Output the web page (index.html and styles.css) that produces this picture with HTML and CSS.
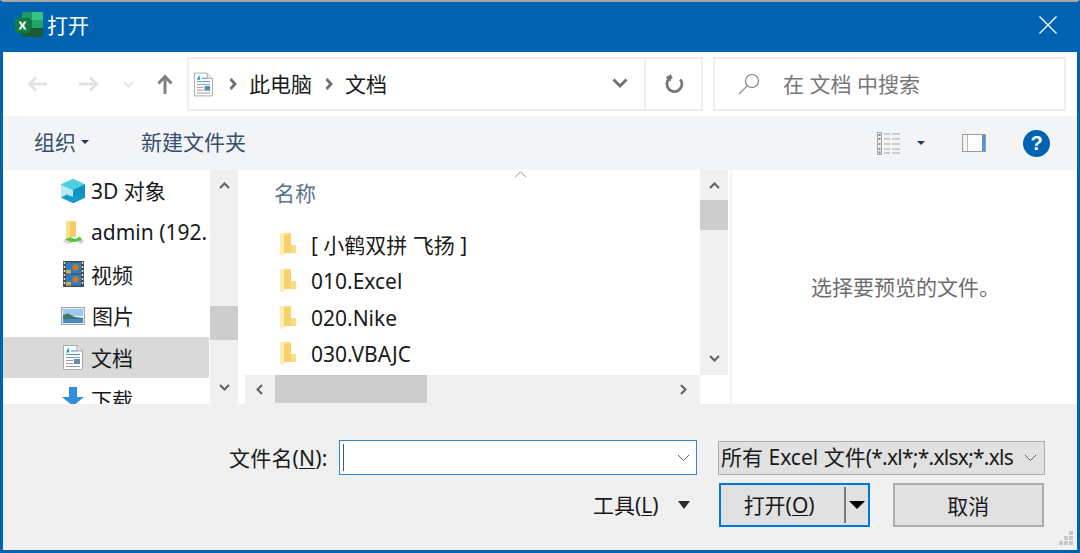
FILE: index.html
```html
<!DOCTYPE html>
<html lang="zh-CN">
<head>
<meta charset="utf-8">
<title>打开</title>
<link rel="stylesheet" href="styles.css">
</head>
<body>
<svg class="defs" width="0" height="0" aria-hidden="true">
  <defs>
    <symbol id="folder" viewBox="0 0 16 24">
      <path d="M0 0H11V12H16V20H5L2 23 0 21Z" fill="#fbdc7e"/>
      <path d="M4 2H11V20H5L4 21Z" fill="#f5d26c"/>
      <path d="M0 0H4V21L2 23 0 21Z" fill="#ffeeb0"/>
    </symbol>
    <symbol id="doc" viewBox="0 0 20 25">
      <path d="M.5.500H14L19.500 6V24.500H.5Z" fill="#fff" stroke="#a9a9a9"/>
      <path d="M14 .5V6H19.500" fill="#e8e8e8" stroke="#a9a9a9"/>
      <path d="M3 7.500 5.500 2.500 6.500 7.500Z" fill="#2f8ad8"/>
      <path d="M8 6h6M3 9.500h14" stroke="#3d93de"/>
      <path d="M3 12.500h14M3 15.500h7M3 18.500h7M3 21.500h14" stroke="#9a9a9a"/>
      <path d="M11 14h6v5h-6Z" fill="#5f8fa8"/>
    </symbol>
  </defs>
</svg>
<div class="window">
  <header class="titlebar">
    <div class="title-left">
      <svg class="app-icon" viewBox="0 0 29 26" width="29" height="26" aria-hidden="true">
        <path d="M7 0H28V8H7Z" fill="#21a366"/>
        <path d="M7 0H17V8H7Z" fill="#1d9a5e"/>
        <path d="M17 0H28V8H17Z" fill="#33c481"/>
        <path d="M7 8H17V16H7Z" fill="#107c41"/>
        <path d="M17 8H28V16H17Z" fill="#21a366"/>
        <path d="M7 16H28V25H7Z" fill="#185c37"/>
        <rect x="0" y="6" width="15" height="15" fill="#107c41"/>
        <path d="M3.500 9.500H6L7.500 12.200 9 9.500H11.500L9 13.500 11.500 17.500H9L7.500 14.800 6 17.500H3.500L6 13.500Z" fill="#fff"/>
      </svg>
      <span class="title-text">打开</span>
    </div>
    <svg class="close-x" viewBox="0 0 18 18" width="18" height="18" aria-hidden="true"><path d="M.5.500 17.500 17.500M17.500.500.5 17.500" stroke="#fff" stroke-width="1.300"/></svg>
  </header>

  <div class="navrow">
    <div class="nav-btns">
      <svg class="nav-arrow" viewBox="0 0 20 16" width="20" height="16" aria-hidden="true"><path d="M20 8H3M9 1.500 2.500 8 9 14.500" fill="none" stroke="#e3e3e3" stroke-width="3"/></svg>
      <svg class="nav-arrow" viewBox="0 0 20 16" width="20" height="16" aria-hidden="true"><path d="M0 8H17M11 1.500 17.500 8 11 14.500" fill="none" stroke="#e3e3e3" stroke-width="3"/></svg>
      <svg class="nav-drop" viewBox="0 0 11 7" width="11" height="7" aria-hidden="true"><path d="M1 1 5.500 5.500 10 1" fill="none" stroke="#e3e3e3" stroke-width="2"/></svg>
      <svg class="nav-up" viewBox="0 0 16 20" width="16" height="20" aria-hidden="true"><path d="M8 20V3M1.500 9.500 8 2.500 14.500 9.500" fill="none" stroke="#808080" stroke-width="3"/></svg>
    </div>
    <div class="address">
      <svg class="addr-doc" width="19" height="25" aria-hidden="true"><use href="#doc"/></svg>
      <svg class="crumb-sep" viewBox="0 0 8 12" width="8" height="12" aria-hidden="true"><path d="M1.500 1 6 6 1.500 11" fill="none" stroke="#6f6f6f" stroke-width="2.800"/></svg>
      <span class="crumb">此电脑</span>
      <svg class="crumb-sep" viewBox="0 0 8 12" width="8" height="12" aria-hidden="true"><path d="M1.500 1 6 6 1.500 11" fill="none" stroke="#6f6f6f" stroke-width="2.800"/></svg>
      <span class="crumb">文档</span>
      <span class="addr-spacer"></span>
      <div class="addr-drop"><svg viewBox="0 0 16 10" width="16" height="10" aria-hidden="true"><path d="M1.500 1.500 8 8 14.500 1.500" fill="none" stroke="#6f6f6f" stroke-width="2.800"/></svg></div>
      <div class="addr-refresh"><svg viewBox="0 0 20 20" width="20" height="20" aria-hidden="true"><path d="M6.500 3.500A7.500 7.500 0 1 0 15 4" fill="none" stroke="#777" stroke-width="2.800" transform="rotate(14 10 10)"/><path d="M8 0V7.500L2.500 3.500Z" fill="#777" transform="translate(-1 0)"/></svg></div>
    </div>
    <div class="search">
      <svg class="search-ico" viewBox="0 0 22 22" width="22" height="22" aria-hidden="true"><circle cx="14" cy="8" r="6.500" fill="none" stroke="#7c7c7c" stroke-width="1.100"/><path d="M9.500 12.500 1 21" stroke="#8c8c8c" stroke-width="1.100"/></svg>
      <span class="search-text">在 文档 中搜索</span>
    </div>
  </div>

  <div class="toolbar">
    <span class="tool org">组织<i class="mini-caret"></i></span>
    <span class="tool newf">新建文件夹</span>
    <span class="toolbar-spacer"></span>
    <svg class="view-ico" viewBox="0 0 24 23" width="24" height="23" aria-hidden="true">
      <rect x=".5" y=".5" width="4" height="22" fill="#eee" stroke="#a8a8a8"/>
      <path d="M1.500 3h2M1.500 7h2" stroke="#5b8fb9" stroke-width="2"/><path d="M1.500 12h2" stroke="#e08a3c" stroke-width="2"/><path d="M1.500 17h2M1.500 20.500h2" stroke="#5b8fb9" stroke-width="2"/>
      <path d="M7 2h6M15 2h8M7 7h6M15 7h8M7 12h6M15 12h8M7 17h6M15 17h8M7 21h6M15 21h8" stroke="#a3a3a3" stroke-width="1.200"/>
    </svg>
    <i class="mini-caret view-caret"></i>
    <svg class="pane-ico" viewBox="0 0 24 18" width="24" height="18" aria-hidden="true">
      <rect x=".5" y=".5" width="23" height="17" fill="#fdfdfd" stroke="#9e9e9e"/>
      <rect x="1" y="1" width="4" height="16" fill="#f4f4f4"/>
      <path d="M5.500 1V17" stroke="#bbb"/>
      <rect x="20" y="1" width="3" height="16" fill="#4a97de"/>
    </svg>
    <span class="help">?</span>
  </div>

  <div class="main">
    <nav class="tree">
      <div class="tree-list">
        <div class="tree-item">
          <svg class="tree-ico" viewBox="0 0 26 26" width="26" height="26" aria-hidden="true">
            <path d="M13 1 25 6.500V19.500L13 25 1 19.500V6.500Z" fill="#18a6d6"/>
            <path d="M13 1 25 6.500 13 12 1 6.500Z" fill="#4ccfe4"/>
            <path d="M1 6.500 13 12V25L1 19.500Z" fill="#b5ecf4"/>
            <path d="M13 12 25 6.500V19.500L13 25Z" fill="#0f93c4"/>
            <path d="M1 19.500 7 16.500 13 19 19 16.500 25 19.500 13 25Z" fill="#129bcc"/>
          </svg><span>3D 对象</span>
        </div>
        <div class="tree-item">
          <svg class="tree-ico" viewBox="0 0 26 26" width="26" height="26" aria-hidden="true">
            <path d="M6 1H16V17H9L6 19Z" fill="#fbe08a"/>
            <path d="M10 2H16V17H10Z" fill="#f3cc63"/>
            <path d="M3 21 6 18.500 11 20 12 23 7 24Z" fill="#d6d6d6"/>
            <path d="M16 21 20 19 24 21 21 24Z" fill="#cfcfcf"/>
            <path d="M5 19.500 10 17 15 19 20 16.500 22 20 15 22 11 22Z" fill="#5fc63a"/>
          </svg><span>admin (192.</span>
        </div>
        <div class="tree-item">
          <svg class="tree-ico" viewBox="0 0 26 26" width="26" height="26" aria-hidden="true">
            <rect x="3" y="0" width="21" height="26" fill="#4a4a4a"/>
            <rect x="6" y="1.500" width="15" height="11" fill="#2d7bc9"/>
            <rect x="6" y="13.500" width="15" height="11" fill="#2d7bc9"/>
            <path d="M6 12.500V9H11V12.500ZM6 24.500V21H11V24.500Z" fill="#c9b04a"/>
            <circle cx="15.500" cy="6.500" r="3.300" fill="#c9791f"/><circle cx="15.500" cy="18.500" r="3.300" fill="#c9791f"/>
            <path d="M4.500 1v24M22.500 1v24" stroke="#e0e0e0" stroke-width="1.500" stroke-dasharray="2 2"/>
          </svg><span>视频</span>
        </div>
        <div class="tree-item">
          <svg class="tree-ico pic-ico" viewBox="0 0 24 18" width="24" height="18" aria-hidden="true">
            <rect x=".5" y=".5" width="23" height="17" fill="#dfeefa" stroke="#a7a7a7"/>
            <rect x="2" y="2" width="20" height="7" fill="#9fc9ec"/>
            <path d="M2 8 7 6.500 14 10 22 11V15H2Z" fill="#3f7a68"/>
            <path d="M2 12H22V16H2Z" fill="#4a8ac0"/>
          </svg><span>图片</span>
        </div>
        <div class="tree-item selected">
          <svg class="tree-ico" width="20" height="25" aria-hidden="true"><use href="#doc"/></svg><span>文档</span>
        </div>
        <div class="tree-item">
          <svg class="tree-ico" viewBox="0 0 26 26" width="26" height="26" aria-hidden="true">
            <path d="M9 1H17V11H24L13 20 2 11H9Z" fill="#2f8ee0"/>
            <rect x="3" y="21" width="20" height="4" fill="#1b6fc2"/>
          </svg><span>下载</span>
        </div>
      </div>
      <div class="vscroll tree-scroll">
        <svg class="sb-up" viewBox="0 0 11 7" width="11" height="7" aria-hidden="true"><path d="M1 6 5.500 1.500 10 6" fill="none" stroke="#606060" stroke-width="2"/></svg>
        <div class="thumb tree-thumb"></div>
        <svg class="sb-down" viewBox="0 0 11 7" width="11" height="7" aria-hidden="true"><path d="M1 1 5.500 5.500 10 1" fill="none" stroke="#606060" stroke-width="2"/></svg>
      </div>
    </nav>
    <section class="files">
      <div class="file-area">
        <div class="file-view">
          <div class="col-head">
            <span>名称</span>
            <svg class="sort-caret" viewBox="0 0 13 7" width="13" height="7" aria-hidden="true"><path d="M1 6 6.500 1 12 6" fill="none" stroke="#9a9a9a"/></svg>
          </div>
          <div class="file-row"><svg class="folder" width="16" height="24" aria-hidden="true"><use href="#folder"/></svg><span>[ 小鹤双拼 飞扬 ]</span></div>
          <div class="file-row"><svg class="folder" width="16" height="24" aria-hidden="true"><use href="#folder"/></svg><span>010.Excel</span></div>
          <div class="file-row"><svg class="folder" width="16" height="24" aria-hidden="true"><use href="#folder"/></svg><span>020.Nike</span></div>
          <div class="file-row"><svg class="folder" width="16" height="24" aria-hidden="true"><use href="#folder"/></svg><span>030.VBAJC</span></div>
        </div>
        <div class="vscroll file-scroll">
          <svg class="sb-up" viewBox="0 0 11 7" width="11" height="7" aria-hidden="true"><path d="M1 6 5.500 1.500 10 6" fill="none" stroke="#606060" stroke-width="2"/></svg>
          <div class="thumb file-thumb"></div>
          <svg class="sb-down" viewBox="0 0 11 7" width="11" height="7" aria-hidden="true"><path d="M1 1 5.500 5.500 10 1" fill="none" stroke="#606060" stroke-width="2"/></svg>
        </div>
      </div>
      <div class="hscroll">
        <svg class="sb-left" viewBox="0 0 7 11" width="7" height="11" aria-hidden="true"><path d="M6 1 1.500 5.500 6 10" fill="none" stroke="#606060" stroke-width="2"/></svg>
        <div class="thumb hthumb"></div>
        <svg class="sb-right" viewBox="0 0 7 11" width="7" height="11" aria-hidden="true"><path d="M1 1 5.500 5.500 1 10" fill="none" stroke="#606060" stroke-width="2"/></svg>
      </div>
    </section>
    <aside class="preview">选择要预览的文件。</aside>
  </div>

  <footer class="bottom">
    <div class="fname-row">
      <label class="fname-label">文件名(<u>N</u>):</label>
      <div class="fname-input">
        <i class="caret-line"></i>
        <svg class="thin-chev" viewBox="0 0 13 8" width="13" height="8" aria-hidden="true"><path d="M1 1 6.500 6.500 12 1" fill="none" stroke="#666"/></svg>
      </div>
      <div class="filter">
        <span class="filter-text">所有 Excel 文件<span class="filter-ext">(*.xl*;*.xlsx;*.xls</span></span>
        <svg class="thin-chev" viewBox="0 0 13 8" width="13" height="8" aria-hidden="true"><path d="M1 1 6.500 6.500 12 1" fill="none" stroke="#666"/></svg>
      </div>
    </div>
    <div class="action-row">
      <span class="tools">工具(<u>L</u>)</span><i class="tools-caret"></i>
      <div class="open-btn"><span class="open-main">打开(<u>O</u>)</span><span class="open-split"><i class="split-caret"></i></span></div>
      <div class="cancel-btn">取消</div>
    </div>
    <svg class="grip" viewBox="0 0 15 15" width="15" height="15" aria-hidden="true"><path d="M11 0h4v4h-4ZM6 5h4v4H6ZM11 5h4v4h-4ZM1 10h4v4H1ZM6 10h4v4H6ZM11 10h4v4h-4Z" fill="#c8c8c8"/></svg>
  </footer>
</div>
</body>
</html>
```
FILE: styles.css
```css
* { box-sizing: border-box; }
html, body { margin: 0; padding: 0; }
body {
  width: 1080px;
  height: 553px;
  overflow: hidden;
  font-family: "Noto Sans", "Noto Sans CJK SC", sans-serif;
  font-size: 21px;
  color: #1a1a1a;
  background: #fff;
}
.defs { position: absolute; }
u { text-underline-offset: 2px; text-decoration-thickness: 1px; }
.window {
  width: 1080px;
  height: 553px;
  display: flex;
  flex-direction: column;
  border: solid #0063b1;
  border-width: 2px 3px 3px 3px;
  border-top-color: #a8a8a8;
}
.titlebar {
  height: 50px;
  margin: 0 -3px;
  padding: 0 23px 4px 15px;
  background: #0063b1;
  display: flex;
  align-items: center;
  justify-content: space-between;
  color: #fff;
}
.title-left { display: flex; align-items: center; gap: 3px; }
.app-icon { display: block; }
.title-text { font-size: 21px; line-height: 28px; }
.navrow {
  height: 64px;
  background: #fff;
  display: flex;
  align-items: center;
  padding: 0 11px 0 0;
}
.nav-btns { width: 184px; display: flex; align-items: center; padding-left: 24px; }
.nav-arrow:nth-child(2) { margin-left: 32px; }
.nav-drop { margin-left: 24px; }
.nav-up { margin-left: 23px; }
.address {
  flex: none;
  width: 516px;
  height: 54px;
  border: 2px solid #eee;
  display: flex;
  align-items: center;
  padding-left: 5px;
}
.addr-doc { margin-right: 16px; }
.crumb-sep { margin: 0 12px 0 0; }
.crumb { margin-right: 13px; line-height: 28px; padding-bottom: 1px; }
.addr-spacer { flex: 1; }
.addr-drop { width: 34px; height: 100%; display: flex; align-items: center; padding: 0 0 2px 2px; }
.addr-refresh {
  width: 57px;
  height: 100%;
  border-left: 2px solid #eee;
  display: flex;
  align-items: center;
  justify-content: center;
}
.search {
  flex: none;
  margin-left: 10px;
  width: 353px;
  height: 54px;
  border: 2px solid #eee;
  display: flex;
  align-items: center;
  padding-left: 23px;
}
.search-text { margin-left: 23px; color: #777; line-height: 28px; }
.toolbar {
  height: 54px;
  background: #f3f4f6;
  display: flex;
  align-items: center;
  color: #35506f;
  line-height: 28px;
}
.tool { padding-bottom: 2px; }
.org { margin-left: 31px; display: flex; align-items: center; }
.newf { margin-left: 52px; }
.mini-caret {
  display: inline-block;
  width: 0;
  height: 0;
  border: 4px solid transparent;
  border-top-color: #1f3a5c;
  border-bottom-width: 0;
  margin-left: 5px;
}
.toolbar-spacer { flex: 1; }
.view-caret { margin-left: 16px; }
.pane-ico { margin-left: 37px; }
.help {
  margin: 0 27px 0 37px;
  width: 27px;
  height: 27px;
  border-radius: 50%;
  background: #0063b1;
  color: #fff;
  font: 700 20px/27px "Liberation Sans", sans-serif;
  text-align: center;
}
.main { height: 234px; display: flex; background: #fff; }
.tree { width: 235px; display: flex; }
.tree-list { width: 207px; overflow: hidden; }
.tree-item {
  height: 41.700px;
  display: flex;
  align-items: center;
  padding-left: 57px;
  white-space: nowrap;
}
.tree-item span { margin-left: 5px; padding-bottom: 1px; }
.tree-item .tree-ico { flex: none; }
.tree-item .pic-ico { margin-left: 1px; }
.tree-item .pic-ico + span { margin-left: 7px; }
.tree-item.selected { background: #d9d9d9; padding-left: 60px; margin-right: 1px; }
.tree-item.selected span { margin-left: 8px; }
.vscroll {
  background: #f0f0f0;
  width: 28px;
  position: relative;
  flex: none;
}
.thumb { background: #cdcdcd; }
.sb-up, .sb-down { position: absolute; left: 9px; }
.sb-up { top: 12px; }
.sb-down { bottom: 13px; }
.tree-thumb { position: absolute; left: 0; right: 0; top: 136px; height: 34px; }
.file-thumb { position: absolute; left: 0; right: 0; top: 30px; height: 30px; }
.files { margin-left: 7px; width: 483px; display: flex; flex-direction: column; }
.file-area { flex: 1; display: flex; min-height: 0; }
.file-view { flex: 1; background: #fff; position: relative; overflow: hidden; }
.col-head {
  height: 56.500px;
  padding: 8px 0 0 29px;
  color: #5b738c;
  line-height: 30px;
}
.sort-caret { position: absolute; left: 269px; top: 1px; }
.file-row {
  height: 36.500px;
  display: flex;
  align-items: center;
  padding-left: 35px;
  line-height: 28px;
}
.file-row span { margin-left: 15px; }
.hscroll {
  height: 29px;
  background: #f0f0f0;
  display: flex;
  align-items: center;
  width: 455px;
  padding-left: 11px;
  position: relative;
}
.hthumb { position: absolute; left: 30px; top: 0; width: 152px; height: 28px; }
.sb-right { position: absolute; left: 435px; top: 9px; }
.file-scroll { height: 100%; }
.preview {
  flex: 1;
  margin-left: 2px;
  border-left: 2px solid #f3f3f3;
  display: flex;
  align-items: center;
  justify-content: center;
  color: #6d6d6d;
  padding: 0 0 2px 2px;
}
.bottom {
  flex: 1;
  background: #f0f0f0;
  position: relative;
  padding-top: 36px;
}
.fname-row { display: flex; align-items: center; height: 35px; }
.fname-label { margin-left: 226px; width: 110px; white-space: nowrap; font-size: 21px; line-height: 28px; letter-spacing: .2px; }
.fname-input {
  width: 358px;
  height: 35px;
  background: #fff;
  border: 1px solid #2d88d0;
  display: flex;
  align-items: center;
  justify-content: space-between;
  padding: 0 6px 0 3px;
}
.caret-line { width: 1px; height: 27px; background: #555; }
.filter {
  margin-left: 21px;
  width: 327px;
  height: 34px;
  background: #e1e1e1;
  border: 1px solid #adadad;
  display: flex;
  align-items: center;
  justify-content: space-between;
  padding: 0 7px 0 2px;
  white-space: nowrap;
  overflow: hidden;
}
.filter-text { line-height: 28px; padding-bottom: 2px; }
.filter-ext { letter-spacing: -.74px; }
.action-row { display: flex; align-items: center; height: 44px; margin-top: 8px; }
.tools { margin-left: 590px; line-height: 28px; white-space: nowrap; }
.tools-caret {
  width: 0;
  height: 0;
  border: 6px solid transparent;
  border-top: 8px solid #2b2b2b;
  border-bottom-width: 0;
  margin-left: 19px;
}
.open-btn {
  margin-left: 29px;
  width: 151px;
  height: 44px;
  border: 2px solid #0078d7;
  background: #e1e1e1;
  display: flex;
  align-items: center;
}
.open-main { width: 123px; padding-right: 6px; text-align: center; line-height: 28px; }
.open-split { flex: 1; height: 36px; border-left: 2px solid #7a7a7a; display: flex; align-items: center; justify-content: center; }
.split-caret { width: 0; height: 0; border: 8px solid transparent; border-top: 8px solid #000; border-bottom-width: 0; }
.cancel-btn {
  margin-left: 23px;
  width: 151px;
  height: 44px;
  border: 2px solid #adadad;
  background: #e1e1e1;
  display: flex;
  align-items: center;
  justify-content: center;
}
.grip { position: absolute; right: 4px; bottom: 4px; }
```
